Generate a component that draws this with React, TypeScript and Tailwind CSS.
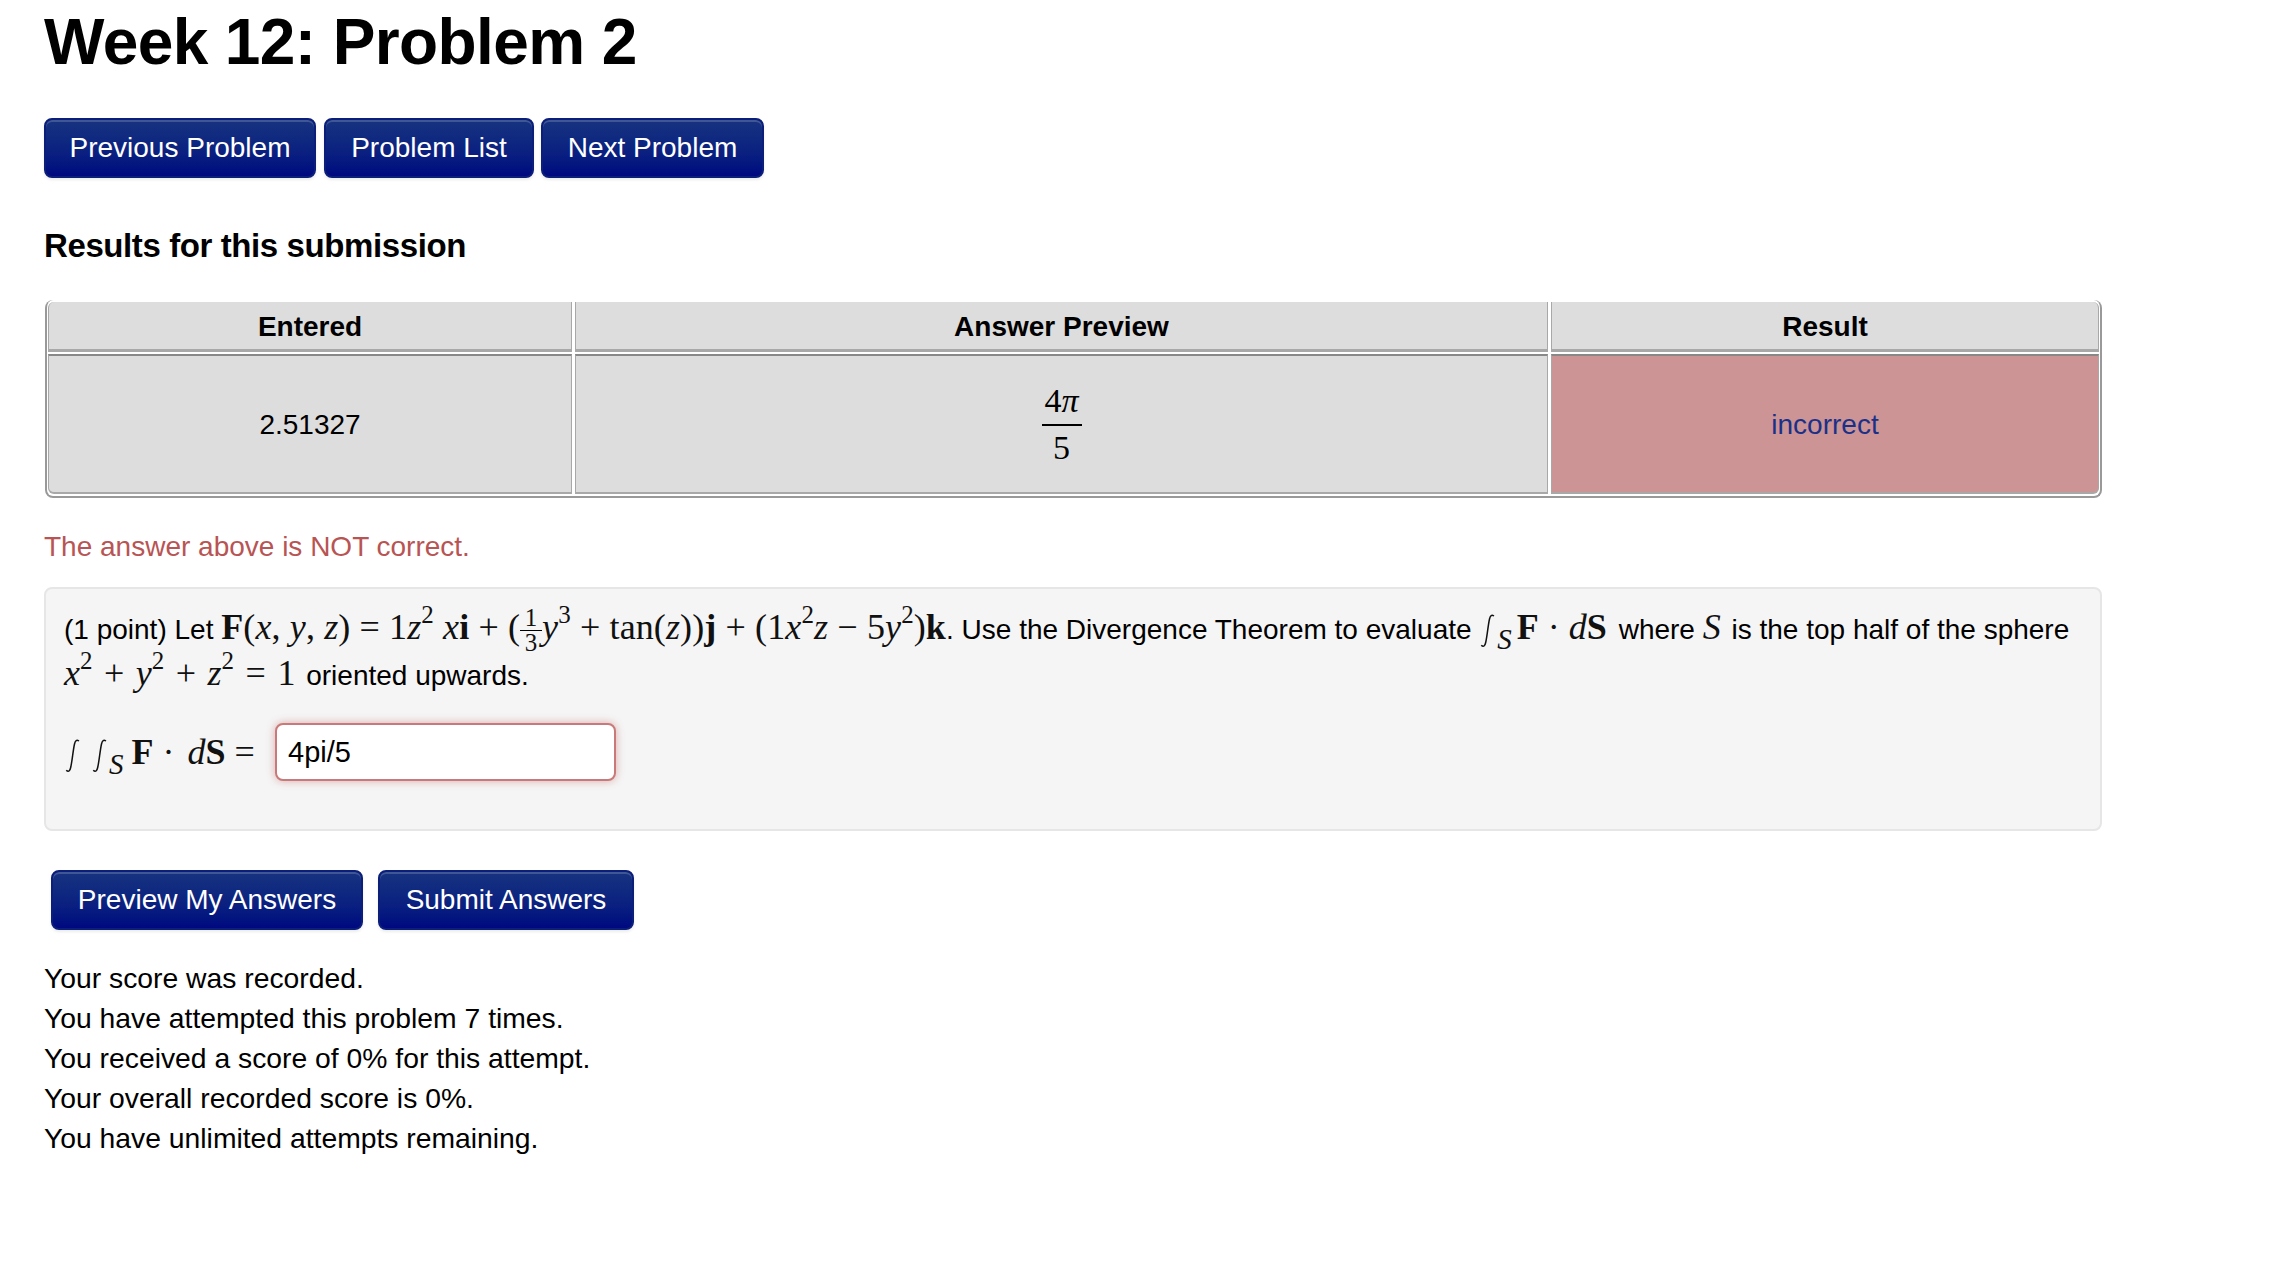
import React from 'react'

const Btn = ({ label, className }: { label: string; className: string }): React.ReactNode => (
  <button
    className={`h-[60px] rounded-[8px] border-2 border-[#0b1f7a] bg-gradient-to-b from-[#17337f] via-[#0a1f80] via-60% to-[#00077f] text-center text-[28px] text-white shadow-[inset_0_2px_0_rgba(255,255,255,0.18),0_2px_3px_rgba(0,0,0,0.08)] ${className}`}
  >
    {label}
  </button>
)

const I = ({ children }: { children: React.ReactNode }): React.ReactNode => <i className="italic">{children}</i>
const B = ({ children }: { children: React.ReactNode }): React.ReactNode => <b className="font-bold">{children}</b>
const Sup = ({ children }: { children: React.ReactNode }): React.ReactNode => (
  <span className="relative top-[-16px] text-[25px] leading-none">{children}</span>
)
const Sub = ({ children }: { children: React.ReactNode }): React.ReactNode => (
  <span className="relative top-[10px] mr-[5px] text-[29px] italic leading-none">{children}</span>
)
const Math = ({ children, className = '' }: { children: React.ReactNode; className?: string }): React.ReactNode => (
  <span className={`whitespace-pre font-['Liberation_Serif',serif] text-[36px] text-[#111] ${className}`}>{children}</span>
)
const Int = ({ className = '' }: { className?: string }): React.ReactNode => (
  <svg viewBox="0 0 24 48" className={`inline-block h-[40px] w-[18px] align-[-12px] ${className}`}>
    <path d="M3 43c3 3 5 1 6-4 2-9 3-22 5-31 1-5 3-6 6-4" fill="none" stroke="#111" strokeWidth="2" />
  </svg>
)

const App = (): React.ReactNode => (
  <div className="min-h-[1277px] w-[2294px] bg-white pl-[44px] font-['Liberation_Sans',Arial,sans-serif] text-black">
    <h1 className="pt-[6px] text-[64px] leading-[72px] font-bold tracking-[-0.6px]">Week 12: Problem 2</h1>

    <div className="mt-[40px] flex gap-[7px]">
      <Btn label="Previous Problem" className="mr-[1px] w-[272px]" />
      <Btn label="Problem List" className="w-[210px]" />
      <Btn label="Next Problem" className="w-[223px]" />
    </div>

    <h2 className="mt-[48px] text-[33px] leading-[40px] font-bold tracking-[-0.4px]">Results for this submission</h2>

    <div className="mt-[34px] ml-[1px] w-[2057px] rounded-[8px] border-x-2 border-b-2 border-[#999] text-center text-[28px]">
      <table className="-mx-[2px] w-[calc(100%+4px)] table-fixed border-separate border-spacing-x-[3px] border-spacing-y-[2px]">
        <tbody>
          <tr>
            <th className="h-[50px] w-[524px] rounded-tl-[6px] border-x border-b-[3px] border-[#a8a8a8] bg-[#ddd] pt-[2px] font-bold">Entered</th>
            <th className="w-[973px] border-x border-b-[3px] border-[#a8a8a8] bg-[#ddd] pt-[2px] font-bold">Answer Preview</th>
            <th className="rounded-tr-[6px] border-x border-b-[3px] border-[#a8a8a8] bg-[#ddd] pt-[2px] font-bold">Result</th>
          </tr>
          <tr>
            <td className="h-[140px] rounded-bl-[6px] border-x border-y-[2px] border-x-[#a8a8a8] border-t-[#888] border-b-[#a8a8a8] bg-[#ddd] pt-[1px]">2.51327</td>
            <td className="border-x border-y-[2px] border-x-[#a8a8a8] border-t-[#888] border-b-[#a8a8a8] bg-[#ddd]">
              <div className="mx-auto flex w-[40px] flex-col items-center font-['Liberation_Serif',serif] text-[34px] leading-[44px]">
                <span className="w-full whitespace-pre border-b-2 border-black pb-[1px] text-center">
                  4<I>π</I>
                </span>
                <span>5</span>
              </div>
            </td>
            <td className="rounded-br-[6px] border-x border-y-[2px] border-x-[#a8a8a8] border-t-[#888] border-b-[#a8a8a8] bg-[#cc9494] pt-[1px] text-[#1b3088]">incorrect</td>
          </tr>
        </tbody>
      </table>
    </div>

    <p className="mt-[29px] text-[28px] leading-[40px] text-[#b85454]">The answer above is NOT correct.</p>

    <div className="mt-[20px] h-[244px] w-[2058px] rounded-[8px] border-2 border-[#e6e6e6] bg-[#f5f5f5] pl-[18px] pt-[15px] text-[28px] leading-[46px]">
      <div className="h-[46px] whitespace-nowrap">
        (1 point) Let{' '}
        <Math className="tracking-[0.12px]">
          <B>F</B>(<I>x</I>, <I>y</I>, <I>z</I>) = 1<I>z</I>
          <Sup>2</Sup> <I>x</I>
          <B>i</B> + (
          <span className="relative inline-flex w-[22px] flex-col items-center align-middle text-[25px] leading-[24px]">
            <span className="w-full border-b-[1.5px] border-black text-center">1</span>
            <span>3</span>
          </span>
          <I>y</I>
          <Sup>3</Sup> + tan(<I>z</I>))<B>j</B> + (1<I>x</I>
          <Sup>2</Sup>
          <I>z</I> − 5<I>y</I>
          <Sup>2</Sup>)<B>k</B>
        </Math>
        . Use the Divergence Theorem to evaluate{' '}
        <Math className="mr-[4px]">
          <Int />
          <Sub>S</Sub>
          <B>F</B> · <I>d</I>
          <B>S</B>
        </Math>{' '}
        where{' '}
        <Math className="mr-[3px]">
          <I>S</I>
        </Math>{' '}
        is the top half of the sphere
      </div>
      <div className="h-[46px] whitespace-nowrap">
        <Math className="mr-[3px] [word-spacing:2.5px]">
          <I>x</I>
          <Sup>2</Sup> + <I>y</I>
          <Sup>2</Sup> + <I>z</I>
          <Sup>2</Sup> = 1
        </Math>{' '}
        oriented upwards.
      </div>
      <div className="mt-[27px] flex items-center">
        <Math className="w-[211px]">
          <Int />
          <span> </span>
          <Int />
          <Sub>S</Sub>
          <span className="ml-[3px]" />
          <B>F</B> · <span className="ml-[4px]" />
          <I>d</I>
          <B>S</B> =
        </Math>
        <input
          readOnly
          value="4pi/5"
          className="h-[58px] w-[341px] rounded-[8px] border-2 border-[#c87a7a] bg-white pl-[11px] text-[29px] text-black shadow-[0_0_8px_rgba(190,80,80,0.45)]"
        />
      </div>
    </div>

    <div className="mt-[39px] flex gap-[15px] pl-[7px]">
      <Btn label="Preview My Answers" className="w-[312px]" />
      <Btn label="Submit Answers" className="w-[256px]" />
    </div>

    <div className="mt-[28px] text-[28.3px] leading-[40px]">
      <p>Your score was recorded.</p>
      <p>You have attempted this problem 7 times.</p>
      <p>You received a score of 0% for this attempt.</p>
      <p>Your overall recorded score is 0%.</p>
      <p>You have unlimited attempts remaining.</p>
    </div>
  </div>
)

export default App
